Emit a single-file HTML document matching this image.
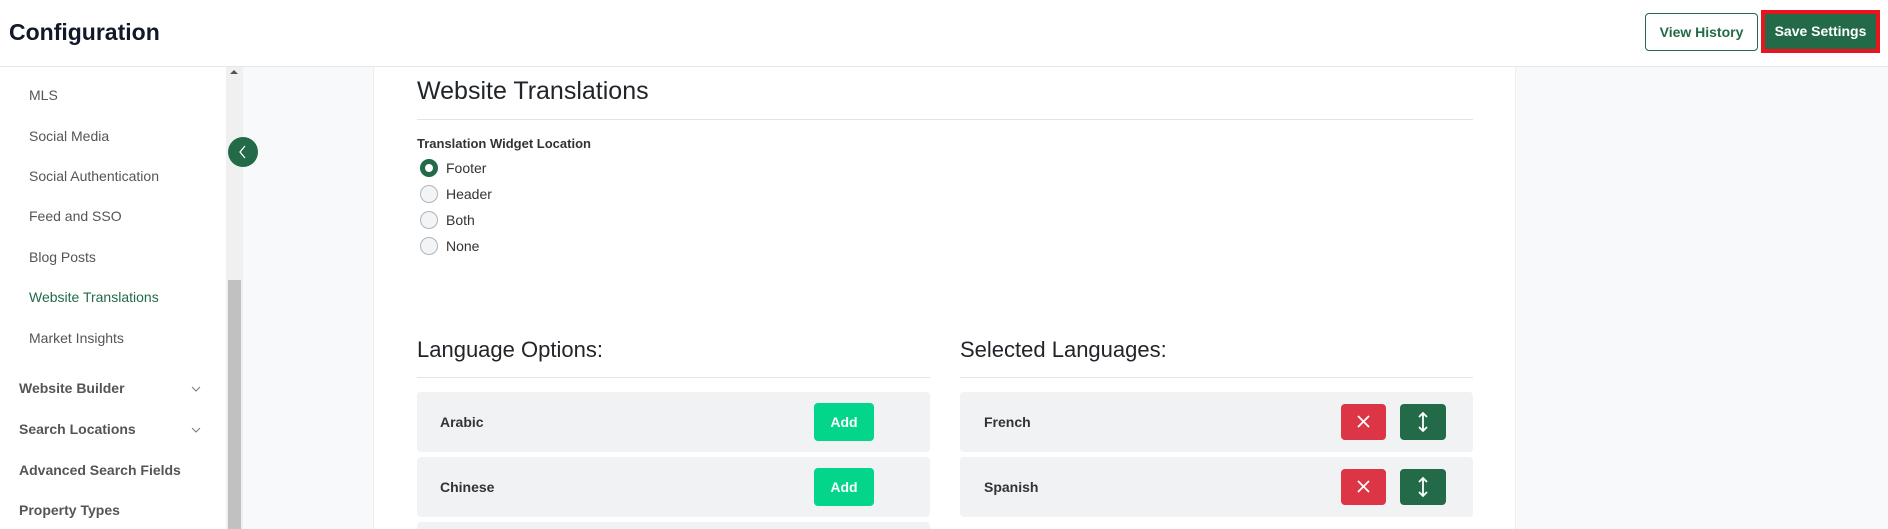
<!DOCTYPE html>
<html style="height:529px;overflow:hidden"><head><meta charset="utf-8"><style>
*{margin:0;padding:0;box-sizing:border-box}
body{width:1888px;height:529px;overflow:hidden;background:#fff;font-family:"Liberation Sans",sans-serif;position:relative;color:#212529}
.a{position:absolute}
.side{font-size:14px;color:#555;white-space:nowrap}
.bold{font-weight:bold;color:#555}
.radio{width:18px;height:18px;border-radius:50%;border:1px solid #adb5bd;background:#f3f4f6}
.row{background:#f1f2f4;border-radius:4px;height:60px}
.lang{font-size:14px;font-weight:bold;color:#333}
</style></head><body>
<div class="a" style="left:9px;top:19px;font-size:23px;font-weight:bold;color:#111827">Configuration</div>
<div class="a" style="left:1645px;top:13px;width:113px;height:38px;border:1px solid #236b48;border-radius:4px;color:#236b48;font-size:14px;font-weight:bold;text-align:center;line-height:36px">View History</div>
<div class="a" style="left:1761px;top:10px;width:119px;height:43px;border:4px solid #e8151e;background:#236b48;color:#fff;font-size:14px;font-weight:bold;text-align:center;line-height:35px">Save Settings</div>
<div class="a" style="left:0;top:66px;width:1888px;height:1px;background:#e5e7eb"></div>
<div class="a" style="left:226px;top:67px;width:17px;height:462px;background:#f0f0f0"></div>
<div class="a" style="left:228px;top:280px;width:13px;height:249px;background:#c1c1c1"></div>
<div class="a" style="left:230px;top:70px;width:0;height:0;border-left:4px solid transparent;border-right:4px solid transparent;border-bottom:4px solid #555"></div>
<div class="a" style="left:243px;top:67px;width:131px;height:462px;background:#f8f9fa;border-right:1px solid #eceef0"></div>
<div class="a" style="left:1515px;top:67px;width:373px;height:462px;background:#f8f9fa;border-left:1px solid #eceef0"></div>
<div class="a" style="left:228px;top:137px;width:30px;height:30px;border-radius:50%;background:#236b48"></div>
<svg class="a" style="left:236px;top:144px" width="14" height="16"><path d="M9 2 L4 8 L9 14" stroke="#fff" stroke-width="1.3" fill="none"/></svg>
<div class="a side" style="left:29px;top:87px">MLS</div>
<div class="a side" style="left:29px;top:128px">Social Media</div>
<div class="a side" style="left:29px;top:168px">Social Authentication</div>
<div class="a side" style="left:29px;top:208px">Feed and SSO</div>
<div class="a side" style="left:29px;top:249px">Blog Posts</div>
<div class="a side" style="left:29px;top:289px;color:#236b48">Website Translations</div>
<div class="a side" style="left:29px;top:330px">Market Insights</div>
<div class="a side bold" style="left:19px;top:380px">Website Builder</div>
<div class="a side bold" style="left:19px;top:421px">Search Locations</div>
<div class="a side bold" style="left:19px;top:462px">Advanced Search Fields</div>
<div class="a side bold" style="left:19px;top:502px">Property Types</div>
<svg class="a" style="left:190px;top:385px" width="12" height="8"><path d="M2 2 L6 6 L10 2" stroke="#777" fill="none"/></svg>
<svg class="a" style="left:190px;top:426px" width="12" height="8"><path d="M2 2 L6 6 L10 2" stroke="#777" fill="none"/></svg>
<div class="a" style="left:417px;top:77px;font-size:25px;color:#212529">Website Translations</div>
<div class="a" style="left:417px;top:119px;width:1056px;height:1px;background:#e2e4e7"></div>
<div class="a" style="left:417px;top:136px;font-size:13px;font-weight:bold;color:#333">Translation Widget Location</div>
<div class="a radio" style="left:420px;top:159px;border:5px solid #236b48;background:#fff"></div>
<div class="a radio" style="left:420px;top:185px"></div>
<div class="a radio" style="left:420px;top:211px"></div>
<div class="a radio" style="left:420px;top:237px"></div>
<div class="a" style="left:446px;top:160px;font-size:14px;color:#333">Footer</div>
<div class="a" style="left:446px;top:186px;font-size:14px;color:#333">Header</div>
<div class="a" style="left:446px;top:212px;font-size:14px;color:#333">Both</div>
<div class="a" style="left:446px;top:238px;font-size:14px;color:#333">None</div>
<div class="a" style="left:417px;top:337px;font-size:22px;color:#212529">Language Options:</div>
<div class="a" style="left:960px;top:337px;font-size:22px;color:#212529">Selected Languages:</div>
<div class="a" style="left:417px;top:377px;width:513px;height:1px;background:#e2e4e7"></div>
<div class="a" style="left:960px;top:377px;width:513px;height:1px;background:#e2e4e7"></div>
<div class="a row" style="left:417px;top:392px;width:513px"></div>
<div class="a row" style="left:417px;top:457px;width:513px"></div>
<div class="a row" style="left:417px;top:522px;width:513px;height:7px;border-radius:4px 4px 0 0"></div>
<div class="a row" style="left:960px;top:392px;width:513px"></div>
<div class="a row" style="left:960px;top:457px;width:513px"></div>
<div class="a lang" style="left:440px;top:414px">Arabic</div>
<div class="a lang" style="left:440px;top:479px">Chinese</div>
<div class="a lang" style="left:984px;top:414px">French</div>
<div class="a lang" style="left:984px;top:479px">Spanish</div>
<div class="a" style="left:814px;top:403px;width:60px;height:38px;background:#03d68a;border-radius:4px;color:#fff;font-weight:bold;font-size:14px;text-align:center;line-height:38px">Add</div>
<div class="a" style="left:814px;top:468px;width:60px;height:38px;background:#03d68a;border-radius:4px;color:#fff;font-weight:bold;font-size:14px;text-align:center;line-height:38px">Add</div>
<svg class="a" style="left:1341px;top:404px" width="46" height="36"><rect width="45" height="36" rx="4" fill="#dc3545"/><path d="M17 12 L28 23 M28 12 L17 23" stroke="#fff" stroke-width="1.8"/></svg>
<svg class="a" style="left:1400px;top:404px" width="46" height="36"><rect width="46" height="36" rx="4" fill="#236b48"/><path d="M23 9 V27 M19 13 L23 9 L27 13 M19 23 L23 27 L27 23" stroke="#fff" stroke-width="1.8" fill="none"/></svg>
<svg class="a" style="left:1341px;top:469px" width="46" height="36"><rect width="45" height="36" rx="4" fill="#dc3545"/><path d="M17 12 L28 23 M28 12 L17 23" stroke="#fff" stroke-width="1.8"/></svg>
<svg class="a" style="left:1400px;top:469px" width="46" height="36"><rect width="46" height="36" rx="4" fill="#236b48"/><path d="M23 9 V27 M19 13 L23 9 L27 13 M19 23 L23 27 L27 23" stroke="#fff" stroke-width="1.8" fill="none"/></svg>
</body></html>
